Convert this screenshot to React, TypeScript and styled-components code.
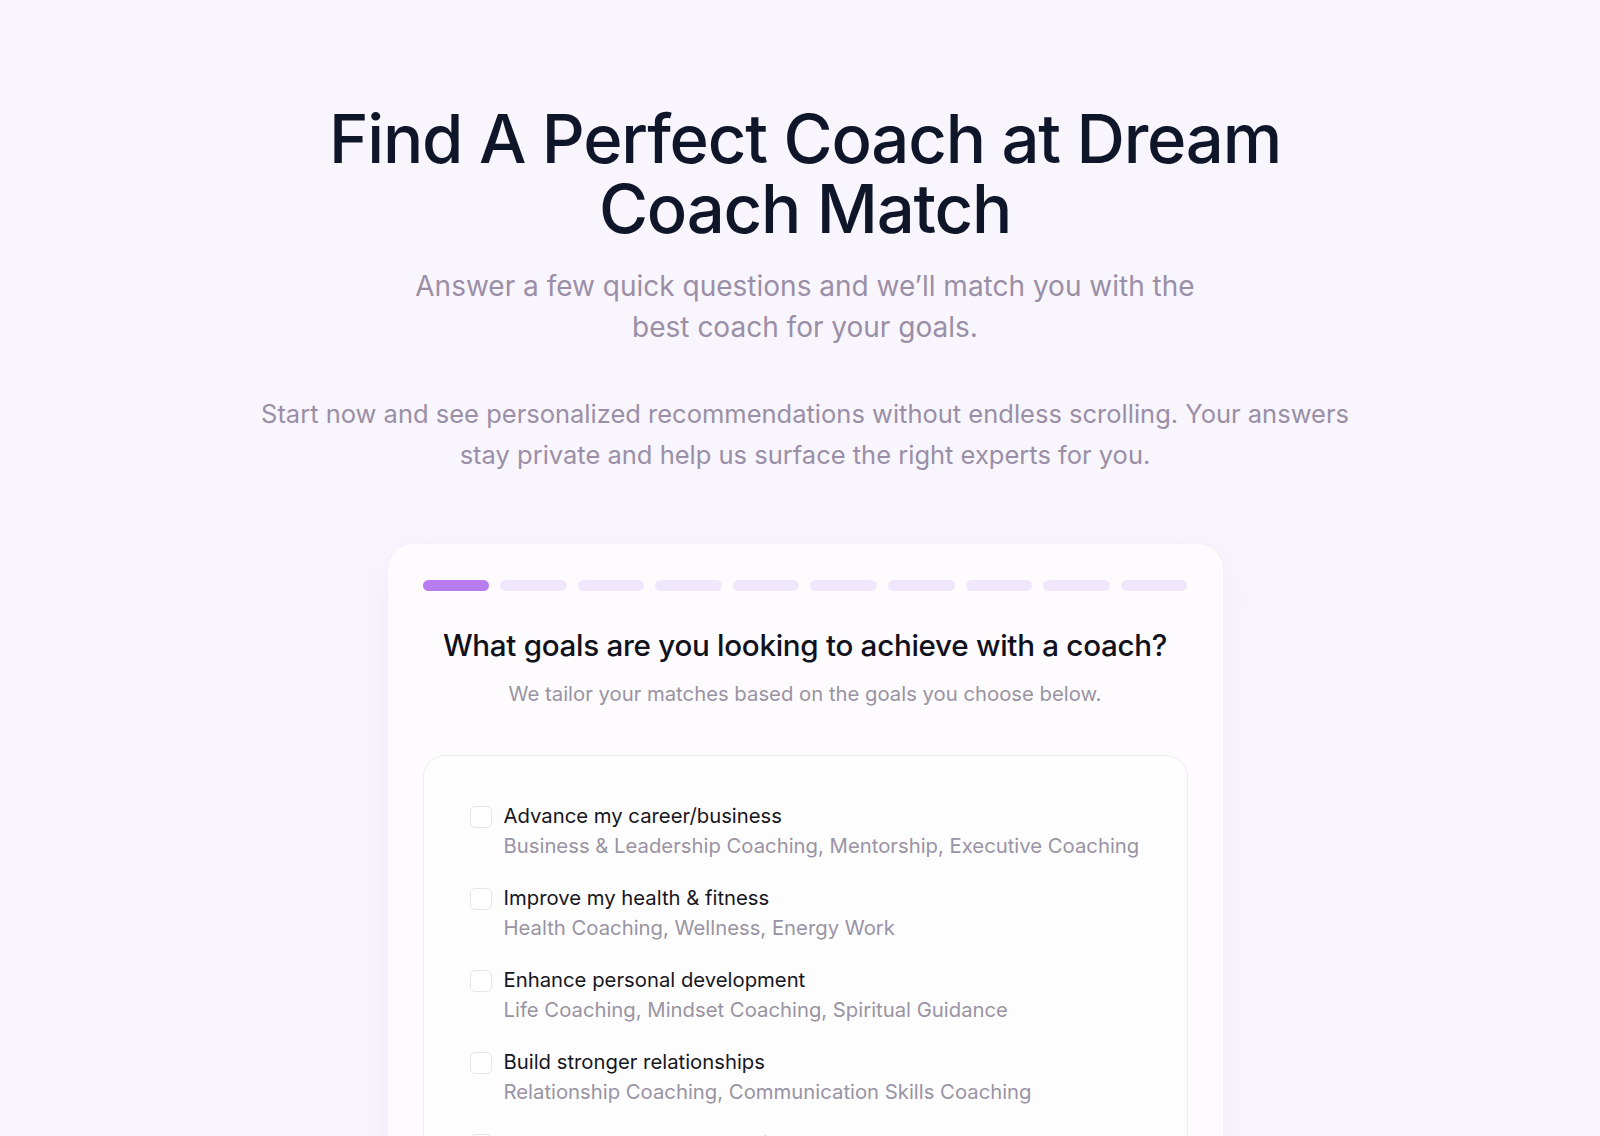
import React, { useState } from "react";
import styled, { createGlobalStyle } from "styled-components";

const colors = {
  bg: "#f9f5fd",
  ink: "#0f1629",
  muted: "#9a8fa7",
  mutedSoft: "#9993a3",
  accent: "#b77cf0",
  track: "#f1e7fc",
  line: "#efecf2",
};

const GlobalStyle = createGlobalStyle`
  * { box-sizing: border-box; }
  html, body {
    margin: 0;
    padding: 0;
    background: ${colors.bg};
  }
  body {
    font-family: Inter, "Noto Sans", "Liberation Sans", sans-serif;
    -webkit-font-smoothing: antialiased;
  }
`;

const goals = [
  {
    title: "Advance my career/business",
    desc: "Business & Leadership Coaching, Mentorship, Executive Coaching",
  },
  {
    title: "Improve my health & fitness",
    desc: "Health Coaching, Wellness, Energy Work",
  },
  {
    title: "Enhance personal development",
    desc: "Life Coaching, Mindset Coaching, Spiritual Guidance",
  },
  {
    title: "Build stronger relationships",
    desc: "Relationship Coaching, Communication Skills Coaching",
  },
  {
    title: "Manage stress and well-being",
    desc: "Stress Management, Mindfulness, Emotional Wellness",
  },
];

const TOTAL_STEPS = 10;

const App: React.FC = () => {
  const [step] = useState<number>(1);
  const [selected, setSelected] = useState<string[]>([]);

  const toggle = (title: string) => {
    setSelected((prev) =>
      prev.includes(title) ? prev.filter((t) => t !== title) : [...prev, title],
    );
  };

  return (
    <StyledPage>
      <GlobalStyle />
      <Hero>
        <Title>
          Find A Perfect Coach at Dream
          <br />
          Coach Match
        </Title>
        <Lead>
          Answer a few quick questions and we’ll match you with the
          <br />
          best coach for your goals.
        </Lead>
        <Lead $spaced>
          Start now and see personalized recommendations without endless scrolling. Your answers
          <br />
          stay private and help us surface the right experts for you.
        </Lead>
      </Hero>

      <Card>
        <ProgressWrap>
          {Array.from({ length: TOTAL_STEPS }).map((_, i) => (
            <Segment key={i} $active={i < step} />
          ))}
        </ProgressWrap>

        <Question>What goals are you looking to achieve with a coach?</Question>
        <QuestionHint>We tailor your matches based on the goals you choose below.</QuestionHint>

        <OptionList>
          {goals.map((goal) => (
            <Option key={goal.title} onClick={() => toggle(goal.title)}>
              <Checkbox $checked={selected.includes(goal.title)} />
              <div>
                <OptionTitle>{goal.title}</OptionTitle>
                <OptionDesc>{goal.desc}</OptionDesc>
              </div>
            </Option>
          ))}
        </OptionList>
      </Card>
    </StyledPage>
  );
};

const StyledPage = styled.div`
  min-height: 100vh;
  width: 100%;
  background-color: ${colors.bg};
  padding: 104px 0 80px 10px;
  display: flex;
  flex-direction: column;
  align-items: center;
  user-select: none;
`;

const Hero = styled.div`
  text-align: center;
  margin-bottom: 68px;
`;

const Title = styled.h1`
  margin: 0;
  font-family: Inter, "Noto Sans", sans-serif;
  font-weight: 500;
  font-size: 67px;
  line-height: 70px;
  letter-spacing: -0.018em;
  color: ${colors.ink};
`;

const Lead = styled.p<{ $spaced?: boolean }>`
  margin: ${(p) => (p.$spaced ? "45px" : "22px")} 0 0;
  font-size: ${(p) => (p.$spaced ? "25.5px" : "28px")};
  line-height: 41px;
  font-weight: 400;
  color: ${colors.muted};
`;

const Card = styled.div`
  width: 837px;
  background: #fdfbfe;
  border: 1px solid #f4f0f7;
  border-radius: 26px;
  box-shadow: 0 12px 40px rgba(140, 100, 190, 0.07);
  padding: 36px 35px 40px;
`;

const ProgressWrap = styled.div`
  display: grid;
  grid-template-columns: repeat(${TOTAL_STEPS}, 1fr);
  gap: 11px;
`;

const Segment = styled.div<{ $active: boolean }>`
  height: 11px;
  border-radius: 6px;
  background: ${(p) => (p.$active ? colors.accent : colors.track)};
`;

const Question = styled.h2`
  margin: 36px 0 0;
  text-align: center;
  font-size: 29.6px;
  line-height: 36px;
  font-weight: 500;
  letter-spacing: -0.01em;
  color: #11111b;
`;

const QuestionHint = styled.p`
  margin: 17px 0 0;
  text-align: center;
  font-size: 20.3px;
  line-height: 28px;
  color: ${colors.mutedSoft};
`;

const OptionList = styled.div`
  margin-top: 47px;
  border: 1px solid ${colors.line};
  border-radius: 22px;
  background: #fefdfe;
  padding: 45px 46px;
  display: flex;
  flex-direction: column;
  gap: 22px;
`;

const Option = styled.div`
  display: flex;
  align-items: flex-start;
  gap: 12px;
  cursor: pointer;
`;

const Checkbox = styled.span<{ $checked: boolean }>`
  flex: none;
  width: 22px;
  height: 22px;
  margin-top: 5px;
  border-radius: 5px;
  border: 1.5px solid #e7e4ea;
  background: ${(p) => (p.$checked ? colors.accent : "#fff")};
`;

const OptionTitle = styled.div`
  font-size: 20.3px;
  line-height: 30px;
  color: #16161d;
`;

const OptionDesc = styled.div`
  font-size: 20.3px;
  line-height: 30px;
  color: ${colors.mutedSoft};
`;

export default App;
